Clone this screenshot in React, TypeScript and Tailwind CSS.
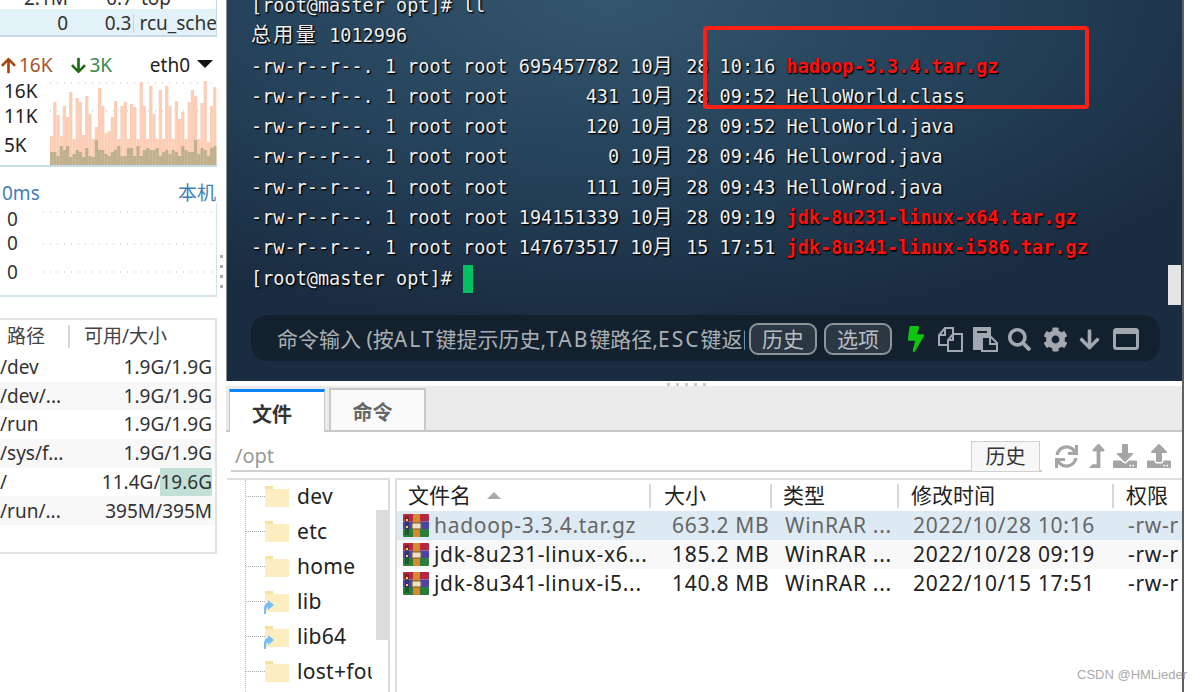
import { FaArrowDown, FaBolt, FaCog, FaDownload, FaLevelUpAlt, FaSearch, FaSync, FaUpload } from "react-icons/fa";

const up = [29,63,50,29,59,48,73,26,67,63,30,69,51,26,38,77,59,32,34,48,64,26,59,63,26,61,58,26,83,59,26,79,51,26,75,26,79,59,26,64,46,53,26,63,75,69,26,62,84,23,59,78];
const down = [13,13,9,19,15,19,8,11,15,13,8,17,9,8,25,15,15,11,9,13,15,19,9,9,17,17,9,19,9,15,17,15,15,17,9,13,15,11,15,13,9,19,15,13,13,25,11,17,15,9,17,19];

const lines = [
  { size: "695457782", mon: "28", time: "10:16", name: "hadoop-3.3.4.tar.gz", red: true },
  { size: "431", mon: "28", time: "09:52", name: "HelloWorld.class" },
  { size: "120", mon: "28", time: "09:52", name: "HelloWorld.java" },
  { size: "0", mon: "28", time: "09:46", name: "Hellowrod.java" },
  { size: "111", mon: "28", time: "09:43", name: "HelloWrod.java" },
  { size: "194151339", mon: "28", time: "09:19", name: "jdk-8u231-linux-x64.tar.gz", red: true },
  { size: "147673517", mon: "15", time: "17:51", name: "jdk-8u341-linux-i586.tar.gz", red: true },
];

const disks = [
  ["/dev", "1.9G/", "1.9G"],
  ["/dev/...", "1.9G/", "1.9G"],
  ["/run", "1.9G/", "1.9G"],
  ["/sys/f...", "1.9G/", "1.9G"],
  ["/", "11.4G/", "19.6G"],
  ["/run/...", "395M/", "395M"],
];

const tree = [
  { name: "dev" },
  { name: "etc" },
  { name: "home" },
  { name: "lib", link: true },
  { name: "lib64", link: true },
  { name: "lost+found" },
];

const files = [
  { name: "hadoop-3.3.4.tar.gz", size: "663.2 MB", time: "2022/10/28 10:16" },
  { name: "jdk-8u231-linux-x6...", size: "185.2 MB", time: "2022/10/28 09:19" },
  { name: "jdk-8u341-linux-i5...", size: "140.8 MB", time: "2022/10/15 17:51" },
];

function Cjk({ children }: { children: string }) {
  return <span className="inline-block w-[22.34px] text-[20px] leading-[20px]">{children}</span>;
}

function Folder({ link }: { link?: boolean }) {
  return (
    <svg width="24" height="24" viewBox="0 0 24 24" className="shrink-0 overflow-visible">
      <path d="M0 1h8v5H0z" fill="#f9e09c" />
      <path d="M0 4h24v18H0z" fill="#fdeec1" />
      {link && <path d="M-1 24v-6c0-3 2-5 4-5v-3l6 5-6 5v-3c-1 0-2 2-2 7z" fill="#78bdf3" />}
    </svg>
  );
}

function RarIcon() {
  return (
    <svg width="26" height="23" viewBox="0 0 26 23" className="shrink-0">
      <rect x="0" y="0" width="26" height="7.5" rx="1" fill="#b5283f" />
      <rect x="0" y="7.5" width="26" height="7.5" fill="#4a44a8" />
      <rect x="0" y="15" width="26" height="8" rx="1" fill="#2c7d3c" />
      <rect x="2" y="2" width="4" height="19" fill="#111" opacity="0.35" />
      <rect x="10" y="0" width="7" height="23" fill="#d58a2e" />
      <rect x="9" y="9" width="9" height="6" fill="#e8e2c8" stroke="#7a5a20" />
      <rect x="3" y="5" width="2" height="2" fill="#f4d24a" />
      <rect x="3" y="12" width="2" height="2" fill="#f4d24a" />
    </svg>
  );
}

function CopyIcon() {
  return (
    <svg width="26" height="26" viewBox="0 0 26 26" className="ml-[8px] shrink-0" fill="none" stroke="#a3a8b0" strokeWidth="2">
      <path d="M16 8V2H8L2 9v10h8" />
      <path d="M8 2v7H2" />
      <path d="M16 8h9v17H11V14z" />
      <path d="M16 8v6h-5" />
    </svg>
  );
}

function PasteIcon() {
  return (
    <svg width="26" height="26" viewBox="0 0 26 26" className="ml-[9px] shrink-0">
      <path d="M1 1h18v23H1z" fill="#a3a8b0" />
      <path d="M5 5h10v2H5z" fill="#13212e" />
      <path d="M10 11h9l6 6v8H10z" fill="#13212e" stroke="#a3a8b0" strokeWidth="2" />
      <path d="M18 11v7h7" fill="none" stroke="#a3a8b0" strokeWidth="2" />
    </svg>
  );
}

function CmdButton({ label }: { label: string }) {
  return (
    <div className="w-[68px] h-[32px] flex items-center justify-center rounded-[9px] border-2 border-[#8f9499] bg-[#2b3843] text-[21px] text-[#b9bec2]">
      {label}
    </div>
  );
}

function UpArrow() {
  return (
    <svg width="17" height="17" viewBox="0 0 448 512" fill="#a8420e">
      <path d="M35 279l-22-22c-10-10-10-25 0-34L207 29c10-10 25-10 34 0l194 194c10 10 10 25 0 34l-22 22c-10 10-25 10-35 0L264 159v305c0 13-11 24-24 24h-32c-13 0-24-11-24-24V159L70 279c-10 10-26 10-35 0z" />
    </svg>
  );
}

export default function App() {
  return (
    <div className="relative flex w-[1203px] h-[692px] overflow-hidden bg-white font-['Noto_Sans','Noto_Sans_CJK_SC',sans-serif]">
      {/* left column */}
      <div className="w-[226px] shrink-0 flex flex-col text-[19px] text-[#333]">
        {/* process table */}
        <div className="w-[217px] h-[37px] border-r border-b-2 border-[#c5dbe6] flex flex-col justify-end">
          <div className="h-[10px] shrink-0 flex items-end pb-[10px] leading-[2px]">
            <span className="w-[68px] text-right">2.1M</span>
            <span className="w-[65px] text-right">0.7</span>
            <span className="ml-2">top</span>
          </div>
          <div className="h-[26px] shrink-0 bg-[#e3f1f8] flex items-center pt-[3px]">
            <span className="w-[69px] text-right">0</span>
            <span className="w-[64px] text-right">0.3</span>
            <span className="w-px h-[19px] bg-[#bcdcc4] ml-[2px]" />
            <span className="ml-[5px] whitespace-nowrap overflow-hidden">rcu_sche</span>
          </div>
        </div>

        {/* network */}
        <div className="w-[217px] h-[29px] mt-[14px] flex items-center">
          <UpArrow />
          <span className="ml-[2px] text-[#a8532a]">16K</span>
          <svg width="17" height="17" viewBox="0 0 448 512" className="ml-[17px]" fill="#1f6a12">
            <path d="M413 233l22 22c10 10 10 25 0 34L241 483c-10 10-25 10-34 0L13 289c-10-10-10-25 0-34l22-22c10-10 25-10 35 0l114 120V48c0-13 11-24 24-24h32c13 0 24 11 24 24v305l114-120c10-10 26-10 35 0z" />
          </svg>
          <span className="ml-[3px] text-[#3a8a4e]">3K</span>
          <span className="ml-auto text-[#222]">eth0</span>
          <span className="ml-[7px] mr-[4px] mb-[3px] w-0 h-0 border-x-[8px] border-t-[8px] border-x-transparent border-t-[#111]" />
        </div>
        <div className="w-[217px] h-[87px] flex relative border-b-2 border-[#c5dbe6]">
          <div className="w-[50px] shrink-0 pl-[4px] text-[#222] leading-[24px] -mt-[1px]">
            <div>16K</div>
            <div className="mt-[1px]">11K</div>
            <div className="mt-[5px]">5K</div>
          </div>
          <svg width="167" height="85" viewBox="0 0 167 85" className="absolute left-[50px] top-0">
            {[3, 31, 60].map((y) => (
              <line key={y} x1="0" x2="167" y1={y} y2={y} stroke="#bbb" strokeDasharray="1 6" />
            ))}
            {up.map((h, i) => (
              <rect key={i} x={i * 3.2} y={85 - h} width="3.2" height={h} fill="#fdcdb5" />
            ))}
            {down.map((h, i) => (
              <rect key={i} x={i * 3.2} y={85 - h} width="3.2" height={h} fill="#bfb08e" />
            ))}
          </svg>
        </div>

        {/* ping */}
        <div className="w-[217px] h-[20px] mt-[16px] flex items-center justify-between text-[#3f7fb5]">
          <span className="ml-[2px]">0ms</span>
          <span className="mr-[1px]">本机</span>
        </div>
        <div className="relative w-[217px] h-[94px] border-b-2 border-r border-[#d4e2ea] text-[#333]">
          <svg width="175" height="72" viewBox="0 0 175 72" className="absolute left-[43px] top-0">
            {[9, 41, 69].map((y) => (
              <line key={y} x1="0" x2="175" y1={y} y2={y} stroke="#bbb" strokeDasharray="1 6" />
            ))}
          </svg>
          <div className="pl-[7px] pt-[4px] leading-[24px]">
            <div>0</div>
            <div>0</div>
            <div className="mt-[5px]">0</div>
          </div>
        </div>

        {/* disks */}
        <div className="w-[217px] h-[236px] mt-[21px] border-y-2 border-r-2 border-[#e2e2e2]">
          <div className="h-[33px] flex items-center text-[#444]">
            <span className="w-[68px] pl-[7px]">路径</span>
            <span className="w-[2px] h-[23px] bg-[#d8d8d8]" />
            <span className="ml-[14px]">可用/大小</span>
          </div>
          {disks.map((d, i) => (
            <div key={i} className={`h-[28.7px] flex items-center justify-between pr-[3px] ${i % 2 ? "bg-[#f8f8f8]" : ""}`}>
              <span className="text-[#333]">{d[0]}</span>
              <span className="flex text-[#333]">
                {d[1]}
                <span className={i === 4 ? "bg-[#c3e0d8]" : ""}>{d[2]}</span>
              </span>
            </div>
          ))}
        </div>
      </div>

      {/* right column */}
      <div className="w-[958px] shrink-0 flex flex-col border-r-2 border-[#5f5f5f]">
        {/* terminal */}
        <div className="relative h-[381px] shrink-0 pl-[24px] border-l border-[#8a8f94] bg-[radial-gradient(ellipse_75%_85%_at_40%_0%,#34566d_0%,#25435b_50%,#1a2c41_100%)] text-[18.55px] text-[#eef0f2] font-['DejaVu_Sans_Mono','Noto_Sans_CJK_SC',monospace] [text-shadow:1px_1px_2px_#000,1px_1px_1px_#000]">
          <div className="-mt-[9px] whitespace-pre [&>div]:h-[30.3px] [&>div]:leading-[30.3px]">
            <div>[root@master opt]# ll</div>
            <div>
              <Cjk>总</Cjk><Cjk>用</Cjk><Cjk>量</Cjk> 1012996
            </div>
            {lines.map((l, i) => (
              <div key={i}>
                {"-rw-r--r--. 1 root root " + l.size.padStart(9, " ") + " 10"}<Cjk>月</Cjk>{" " + l.mon + " " + l.time + " "}
                <span className={l.red ? "text-[#ff1010] font-bold" : ""}>{l.name}</span>
              </div>
            ))}
            <div className="flex items-center">
              [root@master opt]#
              <span className="ml-[11px] w-[10px] h-[28px] bg-[#00c060]" />
            </div>
          </div>

          {/* command bar */}
          <div className="w-[909px] h-[46px] mt-[21px] flex items-center rounded-[16px] bg-[#13212e] pl-[26px] pt-[3px] font-['Noto_Sans','Noto_Sans_CJK_SC',sans-serif] text-[21px] text-[#a9b0b5] [text-shadow:none]">
            <div className="w-[468px] overflow-hidden whitespace-nowrap">
              命令输入 (按<span className="tracking-[2px]">ALT</span>键提示历史,<span className="tracking-[2px]">TAB</span>键路径,<span className="tracking-[2px]">ESC</span>键返回)
            </div>
            <div className="ml-[4px] flex gap-[7px]">
              <CmdButton label="历史" />
              <CmdButton label="选项" />
            </div>
            <FaBolt className="ml-[11px] text-[#0fc40f] shrink-0" size={26} />
            <CopyIcon />
            <PasteIcon />
            <FaSearch className="ml-[10px] text-[#a3a8b0] shrink-0" size={23} />
            <FaCog className="ml-[12px] text-[#a3a8b0] shrink-0" size={25} />
            <FaArrowDown className="ml-[10px] text-[#a3a8b0] shrink-0" size={23} />
            <svg width="26" height="22" viewBox="0 0 26 22" className="ml-[12px] shrink-0">
              <rect x="1.5" y="1.5" width="23" height="19" rx="2" fill="none" stroke="#a3a8b0" strokeWidth="3" />
              <rect x="1" y="1" width="24" height="5" fill="#a3a8b0" />
            </svg>
          </div>

          <div className="absolute right-[1px] top-[265px] w-[13px] h-[40px] bg-[#e4e4e4]" />
        </div>

        {/* splitter */}
        <div className="h-[5px] shrink-0 flex justify-center items-end gap-[6px] pr-[36px]">
          {[0, 1, 2, 3, 4].map((i) => (
            <span key={i} className="w-[3px] h-[3px] bg-[#ccc]" />
          ))}
        </div>

        {/* tabs */}
        <div className="h-[46px] shrink-0 flex items-end gap-[4px] bg-[#ebebeb] pl-[3px] border-b-2 border-[#c8c8c8]">
          <div className="w-[96px] h-[43px] -mb-[2px] flex items-center justify-center pr-[10px] pt-[5px] bg-white border-t-[3px] border-[#0a84ff] border-x border-x-[#c8c8c8] text-[20px] font-bold text-[#333]">
            文件
          </div>
          <div className="w-[97px] h-[42px] flex items-center justify-center pr-[10px] pt-[5px] bg-[#fafafa] border-2 border-b-0 border-[#c8c8c8] text-[20px] font-bold text-[#666]">
            命令
          </div>
        </div>

        {/* path row */}
        <div className="h-[40px] shrink-0 flex items-end pl-[5px]">
          <div className="w-[811px] h-[39px] flex items-end border-b-2 border-[#d0d0d0] pl-[4px] text-[20px] leading-[28px] text-[#999]">
            /opt
            <div className="ml-auto mr-[2px] w-[69px] h-[31px] -mb-[2px] flex items-center justify-center border border-[#d0d0d0] bg-[#f7f7f7] text-[20px] text-[#333]">
              历史
            </div>
          </div>
          <div className="flex items-center h-[39px] pl-[13px] pt-[7px] text-[#a5a5a5]">
            <FaSync size={23} />
            <FaLevelUpAlt size={24} className="ml-[7px]" />
            <FaDownload size={24} className="ml-[4px]" />
            <FaUpload size={24} className="ml-[10px]" />
          </div>
        </div>

        {/* files */}
        <div className="flex-1 flex mt-[6px] min-h-0">
          <div className="relative w-[163px] shrink-0 ml-[1px] border-t-2 border-r-2 border-[#dedede] overflow-hidden text-[21px] text-[#222]">
            <div className="absolute left-[18px] top-0 bottom-0 border-l border-dotted border-[#bbb]" />
            <div className="flex flex-col -mt-[1px]">
              {tree.map((t) => (
                <div key={t.name} className="h-[35px] flex items-center shrink-0">
                  <span className="ml-[19px] w-[19px] border-t border-dotted border-[#aaa]" />
                  <Folder link={t.link} />
                  <span className="ml-[8px] w-[75px] overflow-hidden whitespace-nowrap tracking-[0.3px]">{t.name}</span>
                </div>
              ))}
            </div>
            <div className="absolute right-0 top-[30px] w-[12px] h-[130px] bg-[#dcdcdc]" />
          </div>

          <div className="flex-1 ml-[5px] border-t-2 border-l-2 border-[#dedede] overflow-hidden text-[21px] text-[#222]">
            <div className="h-[31px] flex items-center whitespace-nowrap">
              <div className="w-[254px] pl-[11px] flex items-center border-r-2 border-[#d8d8d8] h-[24px]">
                文件名
                <span className="ml-[16px] w-0 h-0 border-x-[7px] border-b-[7px] border-x-transparent border-b-[#aaa]" />
              </div>
              <div className="w-[121px] pl-[13px] border-r-2 border-[#d8d8d8] h-[24px] flex items-center">大小</div>
              <div className="w-[127px] pl-[11px] border-r-2 border-[#d8d8d8] h-[24px] flex items-center">类型</div>
              <div className="w-[215px] pl-[12px] border-r-2 border-[#d8d8d8] h-[24px] flex items-center">修改时间</div>
              <div className="pl-[12px]">权限</div>
            </div>
            {files.map((f, i) => (
              <div
                key={f.name}
                className={`h-[29px] flex items-center whitespace-nowrap tracking-[0.7px] ${i === 0 ? "bg-[#deeaf3] text-[#666]" : i === 1 ? "bg-[#f8f8f8]" : ""}`}
              >
                <div className="w-[254px] pl-[6px] flex items-center gap-[5px]">
                  <RarIcon />
                  <span>{f.name}</span>
                </div>
                <div className="w-[121px] pl-[21px]">{f.size}</div>
                <div className="w-[127px] pl-[13px]">WinRAR ...</div>
                <div className="w-[215px] pl-[14px]">{f.time}</div>
                <div className="pl-[14px]">-rw-r</div>
              </div>
            ))}
          </div>
        </div>
      </div>

      {/* splitter handle */}
      <div className="absolute left-[220px] top-[255px] flex flex-col gap-[7px]">
        {[0, 1, 2, 3].map((i) => (
          <span key={i} className="w-[3px] h-[3px] bg-[#aaa]" />
        ))}
      </div>

      {/* annotation */}
      <div className="absolute left-[703px] top-[26px] w-[386px] h-[83px] rounded-[4px] border-4 border-[#ff2015]" />

      <div className="absolute right-[16px] bottom-[8px] text-[13px] text-[#aaa] font-['Liberation_Sans',sans-serif]">CSDN @HMLieder</div>
    </div>
  );
}
